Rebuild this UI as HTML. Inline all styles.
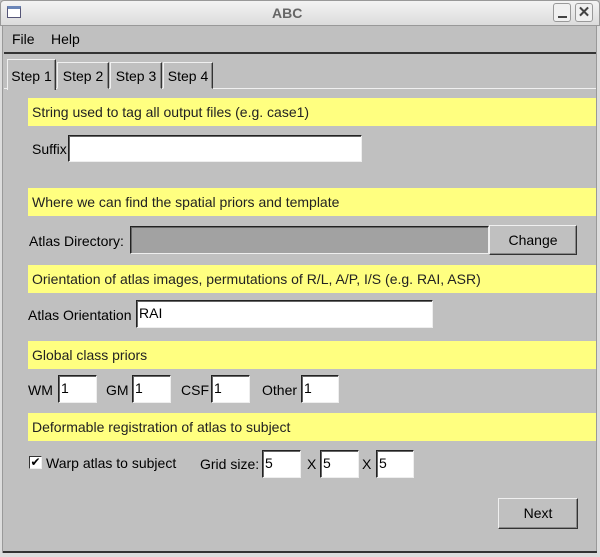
<!DOCTYPE html>
<html><head><style>
*{margin:0;padding:0;box-sizing:border-box}
body{width:600px;height:557px;background:#c0c0c0;font-family:"Liberation Sans",sans-serif;font-size:14px;color:#000;position:relative;overflow:hidden;letter-spacing:0}
.a{position:absolute;white-space:nowrap}
.y{position:absolute;left:28px;width:568px;background:#ffff80;padding-left:4px;color:#222}
.in{position:absolute;background:#fff;border:1px solid;border-color:#222 #eee #eee #222;box-shadow:inset 1px 1px 0 #666;padding-left:2px;line-height:24px}
.btn{position:absolute;background:#c0c0c0;border:1px solid;border-color:#f0f0f0 #333 #333 #f0f0f0;box-shadow:inset -1px -1px 0 #888;text-align:center}
.tab{position:absolute;top:62px;height:27px;border:1px solid;border-color:#f0f0f0 #333 #c0c0c0 #f0f0f0;box-shadow:inset -1px 0 0 #888;text-align:center;line-height:26px}
</style></head><body>
<div class="a" style="left:0;top:0;width:600px;height:26px;background:linear-gradient(#f4f4f4,#dcdcdc);border:1px solid #999;border-radius:4px 4px 0 0"></div>
<div class="a" style="left:7px;top:6px;width:14px;height:12px;border:1px solid #557;background:#fff;border-top:3px solid #6b86b8"></div>
<div class="a" style="left:272px;top:5px;font-weight:bold;color:#666;font-size:14px">ABC</div>
<div class="a" style="left:553px;top:3px;width:18px;height:19px;border:1px solid #999;border-radius:3px;background:#f0f0f0"><div style="position:absolute;left:4px;top:12px;width:9px;height:2px;background:#444"></div></div>
<div class="a" style="left:575px;top:3px;width:18px;height:19px;border:1px solid #999;border-radius:3px;background:#f0f0f0;text-align:center;font-size:15px;line-height:18px;color:#444;font-weight:bold">✕</div>
<div class="a" style="left:0;top:26px;width:3px;height:531px;background:#ddd;border-right:1px solid #999"></div>
<div class="a" style="left:596px;top:26px;width:4px;height:531px;background:#ddd;border-left:1px solid #999"></div>
<div class="a" style="left:12px;top:31px">File</div>
<div class="a" style="left:51px;top:31px">Help</div>
<div class="a" style="left:4px;top:52px;width:592px;height:2px;background:#333"></div>
<div class="a" style="left:4px;top:88px;width:592px;height:1px;background:#f0f0f0"></div>
<div class="tab" style="left:7px;top:59px;height:31px;width:49px;border-bottom:none;background:#c0c0c0;line-height:32px">Step 1</div>
<div class="tab" style="left:57px;width:52px">Step 2</div>
<div class="tab" style="left:110px;width:52px">Step 3</div>
<div class="tab" style="left:163px;width:50px">Step 4</div>
<div class="y" style="top:98px;height:28px;line-height:29px">String used to tag all output files (e.g. case1)</div>
<div class="a" style="left:32px;top:141px">Suffix</div>
<div class="in" style="left:68px;top:135px;width:294px;height:27px"></div>
<div class="y" style="top:188px;height:28px;line-height:29px">Where we can find the spatial priors and template</div>
<div class="a" style="left:29px;top:233px">Atlas Directory:</div>
<div class="in" style="left:130px;top:226px;width:359px;height:28px;background:#a2a2a2"></div>
<div class="btn" style="left:489px;top:225px;width:88px;height:30px;line-height:28px">Change</div>
<div class="y" style="top:265px;height:28px;line-height:29px">Orientation of atlas images, permutations of R/L, A/P, I/S (e.g. RAI, ASR)</div>
<div class="a" style="left:28px;top:307px">Atlas Orientation</div>
<div class="in" style="left:136px;top:300px;width:297px;height:28px">RAI</div>
<div class="y" style="top:341px;height:28px;line-height:29px">Global class priors</div>
<div class="a" style="left:28px;top:382px">WM</div>
<div class="in" style="left:58px;top:375px;width:39px;height:28px">1</div>
<div class="a" style="left:106px;top:382px">GM</div>
<div class="in" style="left:132px;top:375px;width:39px;height:28px">1</div>
<div class="a" style="left:181px;top:382px">CSF</div>
<div class="in" style="left:211px;top:375px;width:39px;height:28px">1</div>
<div class="a" style="left:262px;top:382px">Other</div>
<div class="in" style="left:301px;top:375px;width:38px;height:28px">1</div>
<div class="y" style="top:413px;height:28px;line-height:29px">Deformable registration of atlas to subject</div>
<div class="a" style="left:29px;top:456px;width:13px;height:13px;background:#fff;border:1px solid;border-color:#333 #eee #eee #333;font-size:12px;line-height:11px;text-align:center">✔</div>
<div class="a" style="left:46px;top:455px">Warp atlas to subject</div>
<div class="a" style="left:200px;top:456px">Grid size:</div>
<div class="in" style="left:262px;top:450px;width:39px;height:28px">5</div>
<div class="a" style="left:307px;top:456px">X</div>
<div class="in" style="left:320px;top:450px;width:39px;height:28px">5</div>
<div class="a" style="left:362px;top:456px">X</div>
<div class="in" style="left:376px;top:450px;width:38px;height:28px">5</div>
<div class="btn" style="left:498px;top:498px;width:80px;height:31px;line-height:29px">Next</div>
<div class="a" style="left:3px;top:551px;width:594px;height:2px;background:#333"></div>
<div class="a" style="left:0;top:553px;width:600px;height:4px;background:#ddd"></div>
</body></html>
